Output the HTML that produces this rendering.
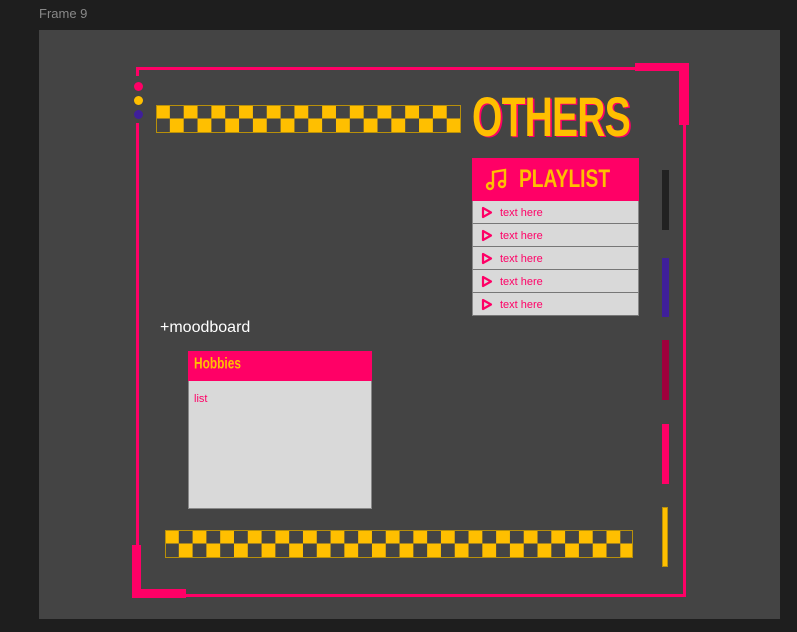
<!DOCTYPE html>
<html><head><meta charset="utf-8"><style>
*{margin:0;padding:0;box-sizing:border-box}
body{width:797px;height:632px;background:#1e1e1e;position:relative;overflow:hidden;font-family:"Liberation Sans",sans-serif}
.a{position:absolute}
.chk{background:conic-gradient(#444 0 25%,#ffbf00 0 50%,#444 0 75%,#ffbf00 0);border:1px solid #b8900a}
.cond{font-family:"Liberation Sans",sans-serif;font-weight:bold}
.row{position:absolute;left:472px;width:167px;height:23px;background:#d9d9d9;border-bottom:1px solid #777;border-left:1px solid #888;border-right:1px solid #888}
.row span{position:absolute;left:27px;top:6px;font-size:11px;color:#ff0066}
.row svg{position:absolute;left:8px;top:5px}
</style></head><body>
<div class="a" style="left:39px;top:6px;font-size:13px;color:#888">Frame 9</div>
<div class="a" style="left:39px;top:30px;width:741px;height:589px;background:#444"></div>
<div class="a" style="left:136px;top:67px;width:550px;height:3px;background:#ff0066"></div>
<div class="a" style="left:683px;top:67px;width:3px;height:530px;background:#ff0066"></div>
<div class="a" style="left:136px;top:594px;width:550px;height:3px;background:#ff0066"></div>
<div class="a" style="left:136px;top:67px;width:3px;height:9px;background:#ff0066"></div>
<div class="a" style="left:136px;top:123px;width:3px;height:474px;background:#ff0066"></div>
<div class="a" style="left:635px;top:63px;width:54px;height:8px;background:#ff0066"></div>
<div class="a" style="left:679px;top:63px;width:10px;height:62px;background:#ff0066"></div>
<div class="a" style="left:132px;top:545px;width:9px;height:53px;background:#ff0066"></div>
<div class="a" style="left:132px;top:589px;width:54px;height:9px;background:#ff0066"></div>
<div class="a" style="left:134px;top:82px;width:9px;height:9px;border-radius:50%;background:#ff0066"></div>
<div class="a" style="left:134px;top:96px;width:9px;height:9px;border-radius:50%;background:#ffbf00"></div>
<div class="a" style="left:134px;top:110px;width:9px;height:9px;border-radius:50%;background:#3f1f9a"></div>
<div class="a chk" style="left:156px;top:105px;width:305px;height:28px;background-size:27.7px 27px;background-position:-1px -1px"></div>
<div class="a chk" style="left:165px;top:530px;width:468px;height:28px;background-size:27.6px 27px;background-position:-1px -1px"></div>
<div class="a cond" style="left:472px;top:89px;font-size:46px;color:#ffbf00;letter-spacing:-1px;text-shadow:2px 1px 0 #ff0066;transform:scale(0.85,1.2);transform-origin:top left;line-height:46px">OTHERS</div>
<div class="a" style="left:472px;top:158px;width:167px;height:43px;background:#ff0066"></div>
<svg class="a" style="left:485px;top:168px" width="24" height="24" viewBox="0 0 24 24" fill="none" stroke="#ffbf00" stroke-width="2.4"><path d="M8 18V4l12-2v13"/><circle cx="5" cy="18" r="3"/><circle cx="17" cy="16" r="3"/></svg>
<div class="a cond" style="left:519px;top:165px;font-size:24px;color:#ffbf00;line-height:28px;transform:scale(0.8,1.05);transform-origin:top left">PLAYLIST</div>
<div class="row" style="top:201px"><svg width="12" height="13" viewBox="0 0 12 13"><path d="M2 2l8 4.5L2 11z" fill="none" stroke="#ff0066" stroke-width="2.2" stroke-linejoin="round"/></svg><span>text here</span></div>
<div class="row" style="top:224px"><svg width="12" height="13" viewBox="0 0 12 13"><path d="M2 2l8 4.5L2 11z" fill="none" stroke="#ff0066" stroke-width="2.2" stroke-linejoin="round"/></svg><span>text here</span></div>
<div class="row" style="top:247px"><svg width="12" height="13" viewBox="0 0 12 13"><path d="M2 2l8 4.5L2 11z" fill="none" stroke="#ff0066" stroke-width="2.2" stroke-linejoin="round"/></svg><span>text here</span></div>
<div class="row" style="top:270px"><svg width="12" height="13" viewBox="0 0 12 13"><path d="M2 2l8 4.5L2 11z" fill="none" stroke="#ff0066" stroke-width="2.2" stroke-linejoin="round"/></svg><span>text here</span></div>
<div class="row" style="top:293px"><svg width="12" height="13" viewBox="0 0 12 13"><path d="M2 2l8 4.5L2 11z" fill="none" stroke="#ff0066" stroke-width="2.2" stroke-linejoin="round"/></svg><span>text here</span></div>
<div class="a" style="left:662px;top:170px;width:7px;height:60px;background:#222"></div>
<div class="a" style="left:662px;top:258px;width:7px;height:59px;background:#3f1f9a"></div>
<div class="a" style="left:662px;top:340px;width:7px;height:60px;background:#a0003c"></div>
<div class="a" style="left:662px;top:424px;width:7px;height:60px;background:#ff0066"></div>
<div class="a" style="left:662px;top:507px;width:6px;height:60px;background:#ffbf00;border:1px solid #b8900a"></div>
<div class="a" style="left:160px;top:319px;font-size:16px;color:#fff">+moodboard</div>
<div class="a" style="left:188px;top:351px;width:184px;height:158px;background:#d9d9d9;border:1px solid #888"></div>
<div class="a" style="left:188px;top:351px;width:184px;height:30px;background:#ff0066"></div>
<div class="a cond" style="left:194px;top:354px;font-size:14px;color:#ffbf00;transform:scale(0.85,1.1);transform-origin:top left">Hobbies</div>
<div class="a" style="left:194px;top:393px;font-size:11px;color:#ff0066">list</div>
</body></html>
